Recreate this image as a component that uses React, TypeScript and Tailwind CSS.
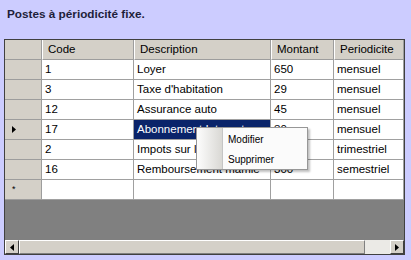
import React from "react";

interface Poste {
  code: string;
  description: string;
  montant: string;
  periodicite: string;
}

const POSTES: Poste[] = [
  { code: "1", description: "Loyer", montant: "650", periodicite: "mensuel" },
  { code: "3", description: "Taxe d'habitation", montant: "29", periodicite: "mensuel" },
  { code: "12", description: "Assurance auto", montant: "45", periodicite: "mensuel" },
  { code: "17", description: "Abonnement Internet", montant: "30", periodicite: "mensuel" },
  { code: "2", description: "Impots sur le revenu", montant: "120", periodicite: "trimestriel" },
  { code: "16", description: "Remboursement mamie", montant: "300", periodicite: "semestriel" },
];

const SELECTED_ROW = 3;

const cell =
  "h-[20px] border-r border-b border-[#a0a0a0] bg-white pl-[3px] flex items-center overflow-hidden whitespace-nowrap";
const headCell =
  "h-[20px] border-r border-b border-[#9d9d9d] border-l border-l-white bg-[#d4d0c8] pl-[5px] flex items-center overflow-hidden whitespace-nowrap";
const rowHead =
  "h-[20px] border-r border-b border-[#9d9d9d] bg-[#d4d0c8] flex items-center pl-[6px]";

const Arrow = ({ dir }: { dir: "left" | "right" }) => (
  <svg width="4" height="7" viewBox="0 0 4 7">
    {dir === "left" ? (
      <polygon points="4,0 4,7 0,3.5" fill="#000" />
    ) : (
      <polygon points="0,0 0,7 4,3.5" fill="#000" />
    )}
  </svg>
);

const ScrollButton = ({ dir }: { dir: "left" | "right" }) => (
  <div className="w-[14px] h-full bg-[#d4d0c8] border-t border-l border-t-white border-l-white border-r border-b border-r-[#404040] border-b-[#404040] flex items-center justify-center">
    <Arrow dir={dir} />
  </div>
);

// menu is drawn over the grid, the cells below stay partly visible
const ContextMenu = () => (
  <div className="absolute left-[196px] top-[127px] w-[112px] h-[43px] bg-[#fbfbfb] border border-[#979797] shadow-[2px_2px_2px_rgba(0,0,0,0.25)] flex">
    <div className="w-[26px] h-full bg-gradient-to-r from-[#fdfdfd] to-[#d9d8d4] border-r border-[#c5c5c5]" />
    <div className="flex flex-col pl-[5px] pt-[2px] text-[10px] text-black">
      <span className="h-[19px] flex items-center">Modifier</span>
      <span className="h-[20px] flex items-center">Supprimer</span>
    </div>
  </div>
);

export default function App() {
  return (
    <div className="relative w-[411px] h-[260px] overflow-hidden bg-[#ccccff] font-['Liberation_Sans',Arial,sans-serif]">
      <h1 className="pt-[7px] pl-[7px] text-[11.75px] leading-[14px] font-bold text-[#1e1e3a]">
        Postes à périodicité fixe.
      </h1>

      <div className="mt-[18px] ml-[4px] w-[401px] h-[216px] border border-[#404040] bg-[#808080] flex flex-col text-[11.5px] text-black">
        <div className="grid grid-cols-[37px_92px_137px_63px_70px]">
          <div className={rowHead} />
          <div className={headCell}>Code</div>
          <div className={headCell}>Description</div>
          <div className={headCell}>Montant</div>
          <div className={headCell}>Periodicite</div>

          {POSTES.map((p, idx) => (
            <React.Fragment key={p.code}>
              <div className={rowHead}>
                {idx === SELECTED_ROW ? (
                  <svg width="4" height="7" viewBox="0 0 4 7" className="ml-[1px]">
                    <polygon points="0,0 0,7 4,3.5" fill="#000" />
                  </svg>
                ) : null}
              </div>
              <div className={cell}>{p.code}</div>
              <div
                className={
                  idx === SELECTED_ROW
                    ? "h-[20px] border-r border-b border-[#a0a0a0] bg-[#0a246a] text-white pl-[3px] flex items-center overflow-hidden whitespace-nowrap"
                    : cell
                }
              >
                {p.description}
              </div>
              <div className={cell}>{p.montant}</div>
              <div className={cell}>{p.periodicite}</div>
            </React.Fragment>
          ))}

          <div className={rowHead}>
            <span className="text-[9px] leading-none ml-[1px]">*</span>
          </div>
          <div className={cell} />
          <div className={cell} />
          <div className={cell} />
          <div className={cell} />
        </div>

        <div className="flex-1" />

        <div className="h-[14px] flex">
          <ScrollButton dir="left" />
          <div className="w-[346px] h-full bg-[#d4d0c8] border-t border-l border-t-white border-l-white border-r border-b border-r-[#808080] border-b-[#808080]" />
          <div className="flex-1 h-full bg-[#ebeae6]" />
          <ScrollButton dir="right" />
        </div>
      </div>

      <ContextMenu />
    </div>
  );
}
